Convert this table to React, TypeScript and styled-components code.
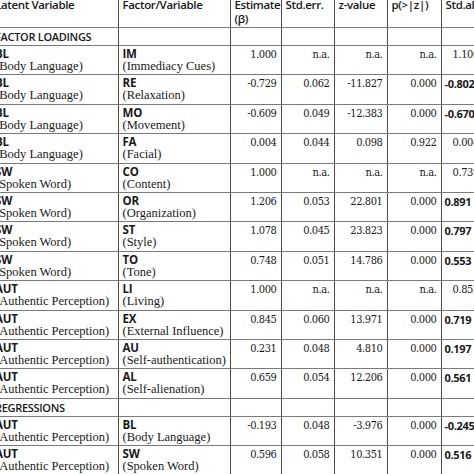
import React from "react";
import styled, { createGlobalStyle } from "styled-components";

const GlobalStyle = createGlobalStyle`
  html, body {
    margin: 0;
    padding: 0;
    background: #fff;
  }
`;

const serif = '"Liberation Serif", "Times New Roman", serif';
const digits = '"DejaVu Serif Condensed", "DejaVu Serif", "Liberation Serif", serif';
const sans = '"Open Sans", "Liberation Sans", sans-serif';

const Frame = styled.div`
  width: 474px;
  height: 474px;
  overflow: hidden;
  background: #fff;
`;

const Table = styled.table`
  border-collapse: collapse;
  table-layout: fixed;
  margin-left: -9px;
  margin-top: -2px;
  width: 562px;
  color: #191919;
`;

const Col = styled.col<{ $w: number }>`
  width: ${(p) => p.$w}px;
`;

const HeadCell = styled.th`
  font-family: ${sans};
  font-weight: 600;
  font-size: 11.5px;
  line-height: 14px;
  text-align: left;
  vertical-align: top;
  padding: 0 3px 1px 4px;
  height: 28px;
  border-right: 1px solid #4a4a4a;
  border-bottom: 1.5px solid #7a7a7a;
  white-space: nowrap;
  letter-spacing: -0.35px;
`;

const Row = styled.tr<{ $section?: boolean }>`
  height: ${(p) => (p.$section ? "18px" : "29.4px")};
`;

const SectionCell = styled.td`
  font-family: ${sans};
  font-weight: 600;
  font-size: 11px;
  line-height: 13px;
  padding: 2px 4px 1px 4px;
  vertical-align: top;
  border-right: 1px solid #4a4a4a;
  border-bottom: 1.5px solid #7a7a7a;
  white-space: nowrap;
  letter-spacing: -0.3px;
`;

const LabelCell = styled.td`
  vertical-align: top;
  padding: 0 4px;
  border-right: 1px solid #4a4a4a;
  border-bottom: 1.5px solid #7a7a7a;
  white-space: nowrap;
`;

const Code = styled.div`
  font-family: ${sans};
  font-weight: 700;
  font-size: 11.5px;
  line-height: 13px;
  padding-top: 1px;
  letter-spacing: -0.2px;
`;

const Name = styled.div`
  font-family: ${serif};
  font-size: 12.5px;
  line-height: 13px;
`;

const NumCell = styled.td<{ $bold?: boolean; $last?: boolean }>`
  font-family: ${(p) => (p.$bold ? sans : digits)};
  font-weight: ${(p) => (p.$bold ? 700 : 400)};
  font-size: 11px;
  line-height: 13px;
  vertical-align: top;
  text-align: ${(p) => (p.$last ? "left" : "right")};
  padding: 2px 4px 0 ${(p) => (p.$last ? (p.$bold ? "3px" : "11px") : "4px")};
  border-right: 1px solid #4a4a4a;
  border-bottom: 1.5px solid #7a7a7a;
  white-space: nowrap;
  letter-spacing: ${(p) => (p.$bold ? "-0.3px" : "-0.4px")};
`;

type Item = {
  latent: string;
  latentName: string;
  code: string;
  name: string;
  est: string;
  se: string;
  z: string;
  p: string;
  std: string;
  bold: boolean;
};

const BL = ["BL", "(Body Language)"];
const SW = ["SW", "(Spoken Word)"];
const AUT = ["AUT", "(Authentic Perception)"];

const make = (
  l: string[],
  code: string,
  name: string,
  est: string,
  se: string,
  z: string,
  p: string,
  std: string,
  bold: boolean
): Item => ({ latent: l[0], latentName: l[1], code, name, est, se, z, p, std, bold });

const loadings: Item[] = [
  make(BL, "IM", "(Immediacy Cues)", "1.000", "n.a.", "n.a.", "n.a.", "1.100", false),
  make(BL, "RE", "(Relaxation)", "-0.729", "0.062", "-11.827", "0.000", "-0.802", true),
  make(BL, "MO", "(Movement)", "-0.609", "0.049", "-12.383", "0.000", "-0.670", true),
  make(BL, "FA", "(Facial)", "0.004", "0.044", "0.098", "0.922", "0.004", false),
  make(SW, "CO", "(Content)", "1.000", "n.a.", "n.a.", "n.a.", "0.739", false),
  make(SW, "OR", "(Organization)", "1.206", "0.053", "22.801", "0.000", "0.891", true),
  make(SW, "ST", "(Style)", "1.078", "0.045", "23.823", "0.000", "0.797", true),
  make(SW, "TO", "(Tone)", "0.748", "0.051", "14.786", "0.000", "0.553", true),
  make(AUT, "LI", "(Living)", "1.000", "n.a.", "n.a.", "n.a.", "0.852", false),
  make(AUT, "EX", "(External Influence)", "0.845", "0.060", "13.971", "0.000", "0.719", true),
  make(AUT, "AU", "(Self-authentication)", "0.231", "0.048", "4.810", "0.000", "0.197", true),
  make(AUT, "AL", "(Self-alienation)", "0.659", "0.054", "12.206", "0.000", "0.561", true),
];

const regressions: Item[] = [
  make(AUT, "BL", "(Body Language)", "-0.193", "0.048", "-3.976", "0.000", "-0.245", true),
  make(AUT, "SW", "(Spoken Word)", "0.596", "0.058", "10.351", "0.000", "0.516", true),
];

const DataRow = ({ item }: { item: Item }) => (
  <Row>
    <LabelCell>
      <Code>{item.latent}</Code>
      <Name>{item.latentName}</Name>
    </LabelCell>
    <LabelCell>
      <Code>{item.code}</Code>
      <Name>{item.name}</Name>
    </LabelCell>
    <NumCell>{item.est}</NumCell>
    <NumCell>{item.se}</NumCell>
    <NumCell>{item.z}</NumCell>
    <NumCell>{item.p}</NumCell>
    <NumCell $last $bold={item.bold}>
      {item.std}
    </NumCell>
  </Row>
);

const Section = ({ title }: { title: string }) => (
  <Row $section>
    <SectionCell>{title}</SectionCell>
    <SectionCell />
    <SectionCell />
    <SectionCell />
    <SectionCell />
    <SectionCell />
    <SectionCell />
  </Row>
);

export default function App() {
  return (
    <Frame>
      <GlobalStyle />
      <Table>
        <colgroup>
          <Col $w={127} />
          <Col $w={112} />
          <Col $w={51} />
          <Col $w={53} />
          <Col $w={53} />
          <Col $w={54} />
          <Col $w={112} />
        </colgroup>
        <thead>
          <tr>
            <HeadCell>Latent Variable</HeadCell>
            <HeadCell>Factor/Variable</HeadCell>
            <HeadCell>
              Estimate
              <br />
              (β)
            </HeadCell>
            <HeadCell>Std.err.</HeadCell>
            <HeadCell>z-value</HeadCell>
            <HeadCell>p(&gt;|z|)</HeadCell>
            <HeadCell>Std.all</HeadCell>
          </tr>
        </thead>
        <tbody>
          <Section title="FACTOR LOADINGS" />
          {loadings.map((it) => (
            <DataRow key={it.code + it.latent} item={it} />
          ))}
          <Section title="REGRESSIONS" />
          {regressions.map((it) => (
            <DataRow key={it.code + "r"} item={it} />
          ))}
        </tbody>
      </Table>
    </Frame>
  );
}
